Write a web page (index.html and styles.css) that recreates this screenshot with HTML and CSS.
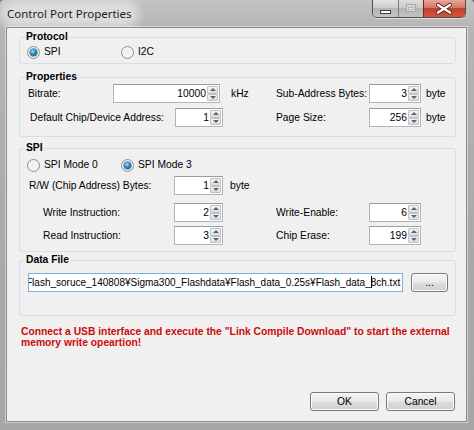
FILE: index.html
```html
<!DOCTYPE html>
<html>
<head>
<meta charset="utf-8">
<title>Control Port Properties</title>
<link rel="stylesheet" href="styles.css">
</head>
<body>
<div class="window">
  <div class="titlebar">
    <div class="title">Control Port Properties</div>
    <div class="caption-btns">
      <div class="cap min"><svg width="25" height="17" viewBox="0 0 25 17"><rect x="7.5" y="10.5" width="10" height="3" fill="#ffffff" stroke="#3c3c3c" stroke-width="1"/></svg></div>
      <div class="cap max"><svg width="24" height="17" viewBox="0 0 24 17"><rect x="7.5" y="4.5" width="9" height="7" fill="#d6d6d6" stroke="#a9a9a9" stroke-width="1"/><rect x="9.5" y="7.5" width="5" height="2" fill="#e8e8e8" stroke="#b8b8b8" stroke-width="1"/></svg></div>
      <div class="cap close"><svg width="41" height="17" viewBox="0 0 41 17"><path d="M14 5 L26 12.5 M26 5 L14 12.5" stroke="#5a1f16" stroke-width="4.2" stroke-linecap="round" fill="none"/><path d="M14 5 L26 12.5 M26 5 L14 12.5" stroke="#ffffff" stroke-width="2.4" stroke-linecap="round" fill="none"/></svg></div>
    </div>
  </div>

  <div class="client">
    <fieldset class="group g-protocol">
      <legend>Protocol</legend>
      <div class="radios">
        <div class="radio checked"><span class="dot"></span><span>SPI</span></div>
        <div class="radio"><span class="dot"></span><span>I2C</span></div>
      </div>
    </fieldset>

    <fieldset class="group g-props">
      <legend>Properties</legend>
      <div class="rows">
        <div class="row">
          <div class="left pl8">
            <span class="lbl w85">Bitrate:</span>
            <div class="spin w107"><span class="val">10000</span><span class="arrows"><i class="up"></i><i class="dn"></i></span></div>
            <span class="unit ml11">kHz</span>
          </div>
          <div class="right">
            <span class="lbl w93">Sub-Address Bytes:</span>
            <div class="spin w52"><span class="val">3</span><span class="arrows"><i class="up"></i><i class="dn"></i></span></div>
            <span class="unit ml5">byte</span>
          </div>
        </div>
        <div class="row mt5">
          <div class="left pl10">
            <span class="lbl w145">Default Chip/Device Address:</span>
            <div class="spin w48"><span class="val">1</span><span class="arrows"><i class="up"></i><i class="dn"></i></span></div>
          </div>
          <div class="right">
            <span class="lbl w93">Page Size:</span>
            <div class="spin w52"><span class="val">256</span><span class="arrows"><i class="up"></i><i class="dn"></i></span></div>
            <span class="unit ml5">byte</span>
          </div>
        </div>
      </div>
    </fieldset>

    <fieldset class="group g-spi">
      <legend>SPI</legend>
      <div class="rows">
        <div class="radios">
          <div class="radio"><span class="dot"></span><span>SPI Mode 0</span></div>
          <div class="radio checked"><span class="dot"></span><span>SPI Mode 3</span></div>
        </div>
        <div class="row mt4">
          <div class="left pl9">
            <span class="lbl w145">R/W (Chip Address) Bytes:</span>
            <div class="spin w49"><span class="val">1</span><span class="arrows"><i class="up"></i><i class="dn"></i></span></div>
            <span class="unit ml7">byte</span>
          </div>
        </div>
        <div class="row mt8">
          <div class="left pl23">
            <span class="lbl w131">Write Instruction:</span>
            <div class="spin w49"><span class="val">2</span><span class="arrows"><i class="up"></i><i class="dn"></i></span></div>
          </div>
          <div class="right">
            <span class="lbl w93">Write-Enable:</span>
            <div class="spin w52"><span class="val">6</span><span class="arrows"><i class="up"></i><i class="dn"></i></span></div>
          </div>
        </div>
        <div class="row mt4">
          <div class="left pl23">
            <span class="lbl w131">Read Instruction:</span>
            <div class="spin w49"><span class="val">3</span><span class="arrows"><i class="up"></i><i class="dn"></i></span></div>
          </div>
          <div class="right">
            <span class="lbl w93">Chip Erase:</span>
            <div class="spin w52"><span class="val">199</span><span class="arrows"><i class="up"></i><i class="dn"></i></span></div>
          </div>
        </div>
      </div>
    </fieldset>

    <fieldset class="group g-data">
      <legend>Data File</legend>
      <div class="data-row">
        <div class="filebox">Flash_soruce_140808¥Sigma300_Flashdata¥Flash_data_0.25s¥Flash_data_<span class="caret"></span>8ch.txt</div>
        <div class="btn browse">...</div>
      </div>
    </fieldset>

    <p class="error">Connect a USB interface and execute the "Link Compile Download" to start the external memory write opeartion!</p>

    <div class="actions">
      <div class="btn">OK</div>
      <div class="btn">Cancel</div>
    </div>
  </div>
</div>
</body>
</html>
```

FILE: styles.css
```css
* { box-sizing: border-box; }
html, body { margin: 0; padding: 0; }
body {
  width: 474px;
  height: 430px;
  overflow: hidden;
  background: #5e5e5e;
  font-family: "Liberation Sans", Arial, sans-serif;
  font-size: 10.3px;
  color: #000;
}

.window {
  width: 474px;
  height: 430px;
  display: flex;
  flex-direction: column;
  border-radius: 4px 4px 0 0;
  background: linear-gradient(to bottom, #c3c3c3 0px, #b5b5b5 27px, #aaaaaa 220px, #a6a6a6 100%);
}

/* ---------- title bar ---------- */
.titlebar {
  height: 27px;
  flex: none;
  display: flex;
  align-items: flex-start;
  padding: 0 8px 0 7px;
}
.title {
  margin-top: 6px;
  font-family: "Noto Sans", "Liberation Sans", sans-serif;
  font-size: 11.5px;
  line-height: 15px;
  color: #1c1c1c;
  white-space: nowrap;
  background: rgba(226, 226, 226, 0.85);
  box-shadow: 0 0 10px 7px rgba(226, 226, 226, 0.85);
  border-radius: 10px;
}
.caption-btns {
  margin-left: auto;
  display: flex;
  height: 18px;
  border: 1px solid #4e4e4e;
  border-top: 0;
  border-radius: 0 0 5px 5px;
  overflow: hidden;
  box-shadow: 0 1px 0 rgba(255, 255, 255, 0.55);
}
.cap { height: 17px; display: flex; }
.cap.min {
  width: 25px;
  background: linear-gradient(to bottom, #e2e2e2 0%, #cdcdcd 45%, #b6b6b6 50%, #c4c4c4 100%);
}
.cap.max {
  width: 25px;
  border-left: 1px solid #7c7c7c;
  background: linear-gradient(to bottom, #dedede 0%, #cacaca 45%, #b4b4b4 50%, #c2c2c2 100%);
}
.cap.close {
  width: 42px;
  border-left: 1px solid #6a2a20;
  background: linear-gradient(to bottom, #e9a798 0%, #d7766a 45%, #c2402e 50%, #d0543c 100%);
}

/* ---------- client ---------- */
.client {
  flex: 1;
  margin: 0 7px 8px 6px;
  border: 1px solid #8a8a8a;
  box-shadow: 0 0 0 1px rgba(255, 255, 255, 0.45);
  background: #f0f0f0;
  display: flex;
  flex-direction: column;
  padding: 3px 10px 10px 12px;
}

.group {
  margin: 0;
  padding: 0;
  min-width: 0;
  border: 1px solid #d5dfe5;
  border-radius: 3px;
}
.group legend {
  margin-left: 5px;
  padding: 0 1px;
  font-weight: bold;
  line-height: 12px;
}
.g-protocol { padding: 2px 0 4px; }
.g-props { margin-top: 7px; padding: 1px 0 9px; }
.g-spi { margin-top: 5px; padding: 4px 0 6px; }
.g-data { margin-top: 2px; padding: 7px 0 23px; }

.rows { display: flex; flex-direction: column; }
.row { display: flex; align-items: center; height: 19px; }
.left { width: 256px; flex: none; display: flex; align-items: center; }
.right { display: flex; align-items: center; }
.lbl { flex: none; white-space: nowrap; line-height: 12px; }
.unit { white-space: nowrap; line-height: 12px; }

.pl8 { padding-left: 8px; }
.pl9 { padding-left: 9px; }
.pl10 { padding-left: 10px; }
.pl23 { padding-left: 23px; }
.w85 { width: 85px; }
.w93 { width: 93px; }
.w131 { width: 131px; }
.w145 { width: 145px; }
.w48 { width: 48px; }
.w49 { width: 49px; }
.w52 { width: 52px; }
.w107 { width: 107px; }
.ml5 { margin-left: 5px; }
.ml7 { margin-left: 7px; }
.ml11 { margin-left: 11px; }
.mt4 { margin-top: 4px; }
.mt5 { margin-top: 5px; }
.mt8 { margin-top: 8px; }

/* ---------- radio ---------- */
.radios { display: flex; height: 14px; align-items: center; padding-left: 7px; }
.radio { width: 94px; flex: none; display: flex; align-items: center; gap: 4px; white-space: nowrap; line-height: 12px; }
.radio .dot {
  position: relative;
  width: 13px;
  height: 13px;
  flex: none;
  border-radius: 50%;
  border: 1px solid #8e8f8f;
  background: radial-gradient(circle at 50% 50%, #ececec 0%, #f6f6f6 45%, #d6d6d6 100%);
  box-shadow: inset 0 0 0 1px #f4f4f4;
}
.radio.checked .dot::after {
  content: "";
  position: absolute;
  left: 2px;
  top: 2px;
  width: 7px;
  height: 7px;
  border-radius: 50%;
  background: radial-gradient(circle at 40% 35%, #9fe4ff 0%, #2d93c6 40%, #0f5079 85%);
  box-shadow: 0 0 0 0.5px #1a4e6e;
}

/* ---------- numeric up-down ---------- */
.spin {
  flex: none;
  display: flex;
  height: 19px;
  background: #fff;
  border: 1px solid #b4b4b4;
  border-top-color: #9c9c9c;
}
.spin .val { flex: 1; text-align: right; line-height: 17px; padding-right: 1px; }
.spin .arrows {
  width: 12px;
  flex: none;
  display: flex;
  flex-direction: column;
  padding: 1px 1px 1px 0;
}
.arrows i {
  flex: 1;
  display: flex;
  align-items: center;
  justify-content: center;
  background: linear-gradient(to bottom, #f6f6f6, #dddddd);
  border: 1px solid #c2c2c2;
  border-radius: 1px;
}
.arrows i::before { content: ""; width: 0; height: 0; }
.arrows i.up::before {
  border-left: 3px solid transparent;
  border-right: 3px solid transparent;
  border-bottom: 3px solid #56657c;
}
.arrows i.dn::before {
  border-left: 3px solid transparent;
  border-right: 3px solid transparent;
  border-top: 3px solid #56657c;
}

/* ---------- data file ---------- */
.data-row { display: flex; align-items: center; padding-left: 8px; }
.filebox {
  width: 375px;
  height: 19px;
  flex: none;
  border: 1px solid #7aaee2;
  background: #fff;
  overflow: hidden;
  white-space: nowrap;
  font-size: 10px;
  line-height: 17px;
  text-indent: -3px;
}
.caret {
  display: inline-block;
  width: 1px;
  height: 12px;
  background: #000;
  vertical-align: -2px;
  margin-right: -1px;
}

/* ---------- buttons ---------- */
.btn {
  width: 69px;
  height: 19px;
  flex: none;
  display: flex;
  align-items: center;
  justify-content: center;
  border: 1px solid #7a7a7a;
  border-radius: 3px;
  background: linear-gradient(to bottom, #f3f3f3 0%, #ebebeb 48%, #dddddd 52%, #d0d0d0 100%);
  box-shadow: inset 0 0 0 1px #fbfbfb;
  line-height: 12px;
}
.btn.browse { width: 37px; margin-left: 8px; }

.error {
  margin: 10px 0 0;
  padding-left: 2px;
  color: #cc0a0a;
  font-weight: bold;
  line-height: 11px;
}

.actions {
  margin-top: auto;
  display: flex;
  justify-content: flex-end;
  gap: 7px;
  padding-right: 1px;
}
```
